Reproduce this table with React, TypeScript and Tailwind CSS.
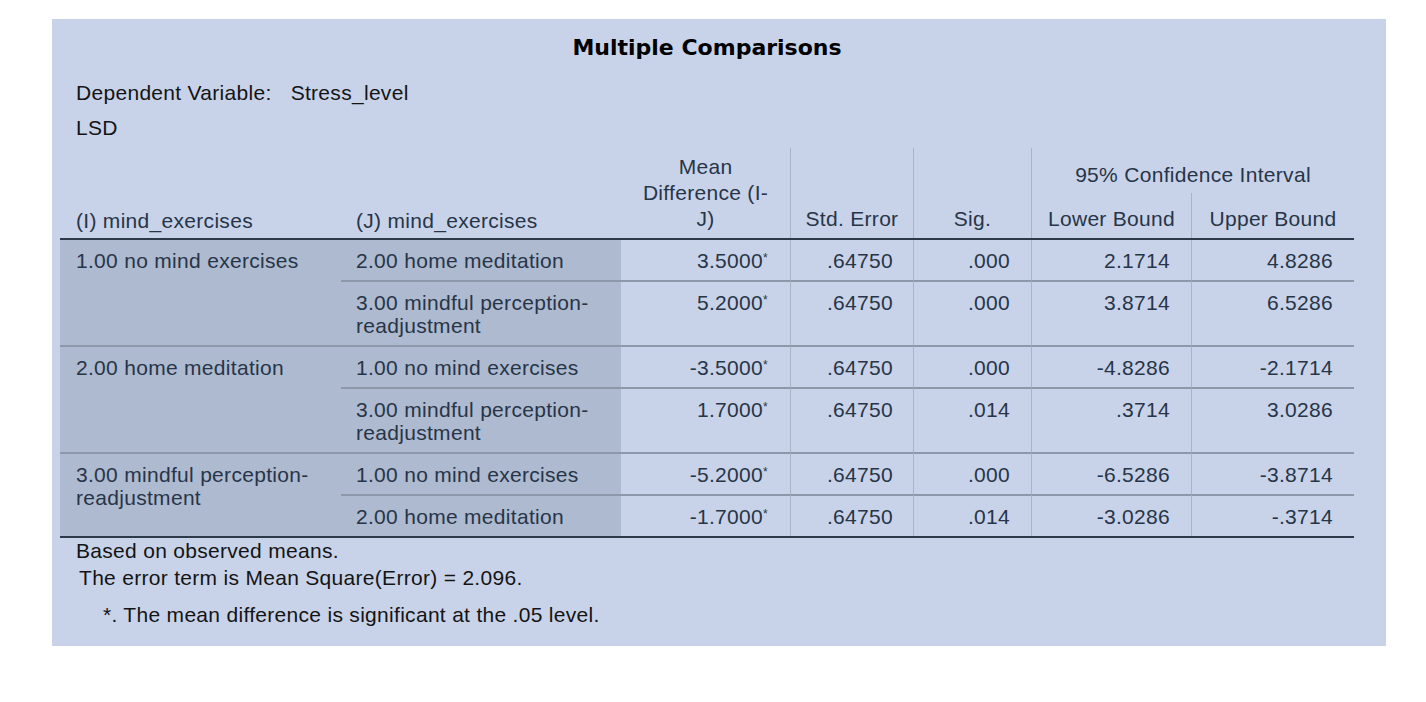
type Item = {
  j: string[];
  md: string;
  se: string;
  sig: string;
  lo: string;
  hi: string;
};

type Group = {
  i: string[];
  items: Item[];
};

const groups: Group[] = [
  {
    i: ["1.00 no mind exercises"],
    items: [
      { j: ["2.00 home meditation"], md: "3.5000", se: ".64750", sig: ".000", lo: "2.1714", hi: "4.8286" },
      { j: ["3.00 mindful perception-", "readjustment"], md: "5.2000", se: ".64750", sig: ".000", lo: "3.8714", hi: "6.5286" },
    ],
  },
  {
    i: ["2.00 home meditation"],
    items: [
      { j: ["1.00 no mind exercises"], md: "-3.5000", se: ".64750", sig: ".000", lo: "-4.8286", hi: "-2.1714" },
      { j: ["3.00 mindful perception-", "readjustment"], md: "1.7000", se: ".64750", sig: ".014", lo: ".3714", hi: "3.0286" },
    ],
  },
  {
    i: ["3.00 mindful perception-", "readjustment"],
    items: [
      { j: ["1.00 no mind exercises"], md: "-5.2000", se: ".64750", sig: ".000", lo: "-6.5286", hi: "-3.8714" },
      { j: ["2.00 home meditation"], md: "-1.7000", se: ".64750", sig: ".014", lo: "-3.0286", hi: "-.3714" },
    ],
  },
];

const cols = "grid grid-cols-[281px_280px_169px_123px_118px_160px_163px]";

function Lines({ lines }: { lines: string[] }) {
  return (
    <>
      {lines.map((l, k) => (
        <div key={k}>{l}</div>
      ))}
    </>
  );
}

export default function App() {
  return (
    <div className="min-h-screen bg-white pt-[19px] pl-[52px]">
      <div
        className="w-[1334px] bg-[#c8d3e9] pt-[13px] pb-[19px] text-[21px] tracking-[0.3px] text-[#141414]"
        style={{ fontFamily: '"Liberation Sans", Arial, sans-serif' }}
      >
        {/* title */}
        <div className="ml-[8px] w-[1294px] text-center">
          <span
            className="text-[22px] leading-[26px] font-bold tracking-normal text-black"
            style={{ fontFamily: '"DejaVu Sans", sans-serif' }}
          >
            Multiple Comparisons
          </span>
        </div>

        <div className="mt-[17px] flex pl-[24px] leading-[24px]">
          <span>Dependent Variable:</span>
          <span className="ml-[19px]">Stress_level</span>
        </div>
        <div className="mt-[11px] pl-[24px] leading-[24px]">LSD</div>

        {/* table */}
        <div className="mt-[8px] ml-[8px] w-[1294px] text-[#273547]">
          {/* header */}
          <div className={`${cols} grid-rows-[45px_45px] border-b-2 border-[#2c3949] leading-[26px]`}>
            <div className="row-span-2 flex items-end pl-[16px] pb-[4px]">(I) mind_exercises</div>
            <div className="row-span-2 flex items-end pl-[15px] pb-[4px]">(J) mind_exercises</div>
            <div className="row-span-2 flex flex-col items-center justify-end pb-[6px] text-center">
              <div>Mean</div>
              <div>Difference (I-</div>
              <div>J)</div>
            </div>
            <div className="row-span-2 flex items-end justify-center border-l border-[#a9b3c6] pb-[6px]">Std. Error</div>
            <div className="row-span-2 flex items-end justify-center border-l border-[#a9b3c6] pb-[6px]">Sig.</div>
            <div className="col-span-2 flex items-end justify-center border-l border-[#a9b3c6] pb-[5px]">
              95% Confidence Interval
            </div>
            <div className="flex items-end justify-center border-l border-[#a9b3c6] pb-[6px]">Lower Bound</div>
            <div className="flex items-end justify-center border-l border-[#a9b3c6] pb-[6px]">Upper Bound</div>
          </div>

          {/* body */}
          <div className={`${cols} border-b-2 border-[#2c3949] leading-[23px]`}>
            {groups.map((g, gi) =>
              g.items.map((it, k) => {
                const top = gi === 0 && k === 0 ? "" : "border-t-2";
                return [
                  k === 0 ? (
                    <div
                      key={`i${gi}`}
                      className={`row-span-2 bg-[#aebad0] pl-[16px] pt-[9px] ${gi === 0 ? "" : "border-t-2"} border-[#8d98ab]`}
                    >
                      <Lines lines={g.i} />
                    </div>
                  ) : null,
                  <div key={`j${gi}${k}`} className={`bg-[#aebad0] pl-[15px] pt-[9px] pb-[8px] ${top} border-[#8d98ab]`}>
                    <Lines lines={it.j} />
                  </div>,
                  <div key={`m${gi}${k}`} className={`pr-[22px] pt-[9px] text-right ${top} border-[#8d98ab]`}>
                    {it.md}
                    <sup className="text-[12px]">*</sup>
                  </div>,
                  <div key={`s${gi}${k}`} className={`border-l border-l-[#a9b3c6] pr-[20px] pt-[9px] text-right ${top} border-t-[#8d98ab]`}>
                    {it.se}
                  </div>,
                  <div key={`g${gi}${k}`} className={`border-l border-l-[#a9b3c6] pr-[21px] pt-[9px] text-right ${top} border-t-[#8d98ab]`}>
                    {it.sig}
                  </div>,
                  <div key={`l${gi}${k}`} className={`border-l border-l-[#a9b3c6] pr-[21px] pt-[9px] text-right ${top} border-t-[#8d98ab]`}>
                    {it.lo}
                  </div>,
                  <div key={`h${gi}${k}`} className={`border-l border-l-[#a9b3c6] pr-[21px] pt-[9px] text-right ${top} border-t-[#8d98ab]`}>
                    {it.hi}
                  </div>,
                ];
              })
            )}
          </div>
        </div>

        {/* footnotes */}
        <div className="mt-[1px] pl-[24px] leading-[24px] text-[#141414]">
          <div>Based on observed means.</div>
          <div className="mt-[3px] pl-[3px]">The error term is Mean Square(Error) = 2.096.</div>
          <div className="mt-[13px] pl-[27px]">*. The mean difference is significant at the .05 level.</div>
        </div>
      </div>
    </div>
  );
}
